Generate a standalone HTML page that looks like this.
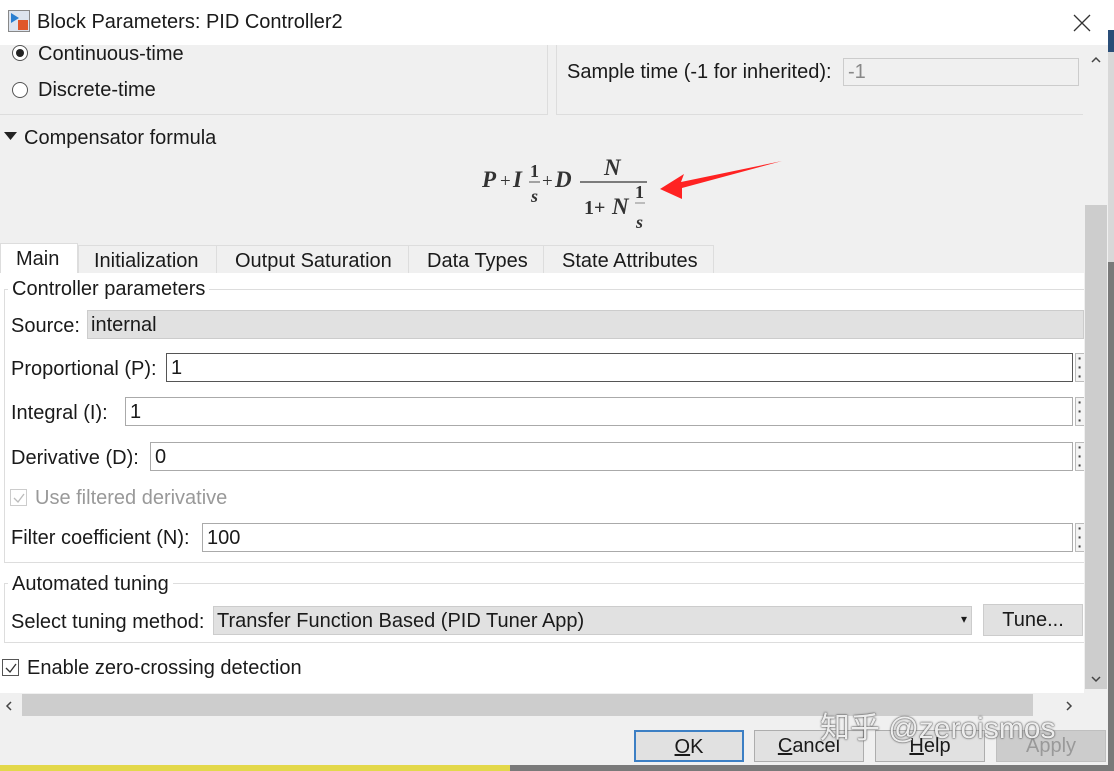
<!DOCTYPE html>
<html><head><meta charset="utf-8"><style>
*{margin:0;padding:0;box-sizing:border-box}
body{width:1114px;height:771px;overflow:hidden;background:#7a7a7a;font-family:"Liberation Sans",sans-serif;font-size:20px;color:#1a1a1a;position:relative}
.a{position:absolute;white-space:nowrap}
.inp{position:absolute;background:#fff;border:1px solid #aaa;height:29px;padding-left:4px;line-height:28px}
.dots{position:absolute;width:10px;height:29px;border:1px solid #bbb;background:#f4f4f4;font-size:14px;line-height:9px;text-align:center;color:#444;font-weight:bold}
.btn{position:absolute;top:730px;height:32px;background:#e1e1e1;border:1px solid #adadad;text-align:center;line-height:31px}
</style></head><body>
<div class="a" style="left:1108px;top:0;width:6px;height:30px;background:#fff"></div>
<div class="a" style="left:1108px;top:30px;width:6px;height:22px;background:#2a4e78"></div>
<div class="a" style="left:1108px;top:52px;width:6px;height:210px;background:#d8d8d8"></div>
<div class="a" style="left:0;top:0;width:1108px;height:765px;background:#f0f0f0"></div>
<div class="a" style="left:0;top:765px;width:510px;height:6px;background:#e3d84a"></div>
<div class="a" style="left:0;top:0;width:1108px;height:45px;background:#fff"></div>
<div class="a" style="left:8px;top:10px;width:22px;height:22px;border:1px solid #888;background:#dde4ee"><div class="a" style="left:2px;top:2px;width:0;height:0;border-left:8px solid #2a7fd0;border-top:5px solid transparent;border-bottom:5px solid transparent"></div><div class="a" style="left:9px;top:9px;width:10px;height:10px;background:#e0572a"></div></div>
<div class="a" style="left:37px;top:11px;font-size:20px">Block Parameters: PID Controller2</div>
<svg class="a" style="left:1072px;top:13px" width="20" height="20"><path d="M2 2L18 18M18 2L2 18" stroke="#333" stroke-width="1.3"/></svg>
<div class="a" style="left:0;top:45px;width:548px;height:70px;border-right:1px solid #ddd;border-bottom:1px solid #ddd"></div>
<div class="a" style="left:556px;top:45px;width:527px;height:70px;border-left:1px solid #ddd;border-bottom:1px solid #ddd"></div>
<div class="a" style="left:12px;top:45px;width:16px;height:16px;border:1px solid #555;border-radius:50%;background:#fff"><div class="a" style="left:3px;top:3px;width:8px;height:8px;border-radius:50%;background:#222"></div></div>
<div class="a" style="left:38px;top:43px">Continuous-time</div>
<div class="a" style="left:12px;top:82px;width:16px;height:16px;border:1px solid #555;border-radius:50%;background:#fff"></div>
<div class="a" style="left:38px;top:79px">Discrete-time</div>
<div class="a" style="left:567px;top:61px">Sample time (-1 for inherited):</div>
<div class="a" style="left:843px;top:58px;width:236px;height:28px;border:1px solid #ccc;background:#f0f0f0;color:#888;padding-left:4px;line-height:27px">-1</div>
<svg class="a" style="left:4px;top:132px" width="14" height="10"><path d="M0 0H13L6.5 8Z" fill="#222"/></svg>
<div class="a" style="left:24px;top:127px">Compensator formula</div>
<svg class="a" style="left:470px;top:150px" width="320" height="85" font-family="Liberation Serif,serif" fill="#333">
<text x="12" y="37" font-size="23" font-style="italic" font-weight="bold">P</text>
<text x="30" y="37" font-size="19">+</text>
<text x="43" y="37" font-size="23" font-style="italic" font-weight="bold">I</text>
<text x="60" y="27" font-size="18" font-weight="bold">1</text>
<line x1="59" y1="32" x2="70" y2="32" stroke="#555"/>
<text x="61" y="52" font-size="18" font-style="italic" font-weight="bold">s</text>
<text x="72" y="37" font-size="19">+</text>
<text x="85" y="37" font-size="23" font-style="italic" font-weight="bold">D</text>
<line x1="110" y1="32" x2="177" y2="32" stroke="#555" stroke-width="1.5"/>
<text x="134" y="25" font-size="23" font-style="italic" font-weight="bold">N</text>
<text x="114" y="64" font-size="20" font-weight="bold">1+</text>
<text x="142" y="64" font-size="23" font-style="italic" font-weight="bold">N</text>
<text x="165" y="48" font-size="18" font-weight="bold">1</text>
<line x1="165" y1="53" x2="175" y2="53" stroke="#888"/>
<text x="166" y="78" font-size="18" font-style="italic" font-weight="bold">s</text>
<polygon points="190,39 214,24 211,32 312,11 212,38 212,49" fill="#f22"/>
</svg>
<div class="a" style="left:0;top:243px;width:78px;height:32px;background:#fff;border:1px solid #ddd;border-bottom:none"></div>
<div class="a" style="left:16px;top:248px">Main</div>
<div class="a" style="left:78px;top:245px;width:636px;height:28px;border:1px solid #ddd;border-bottom:none"></div>
<div class="a" style="left:216px;top:245px;width:1px;height:28px;background:#ddd"></div>
<div class="a" style="left:408px;top:245px;width:1px;height:28px;background:#ddd"></div>
<div class="a" style="left:543px;top:245px;width:1px;height:28px;background:#ddd"></div>
<div class="a" style="left:94px;top:250px">Initialization</div>
<div class="a" style="left:235px;top:250px">Output Saturation</div>
<div class="a" style="left:427px;top:250px">Data Types</div>
<div class="a" style="left:562px;top:250px">State Attributes</div>
<div class="a" style="left:0;top:273px;width:1084px;height:420px;background:#fff"></div>
<div class="a" style="left:4px;top:289px;width:1080px;height:274px;border:1px solid #ddd;border-right:none"></div>
<div class="a" style="left:8px;top:278px;background:#fff;padding:0 4px">Controller parameters</div>
<div class="a" style="left:11px;top:315px">Source:</div>
<div class="a" style="left:87px;top:310px;width:997px;height:29px;background:#e1e1e1;border:1px solid #ccc;padding-left:3px;line-height:28px">internal</div>
<div class="a" style="left:11px;top:358px">Proportional (P):</div>
<div class="inp" style="left:166px;top:353px;width:907px;border-color:#555">1</div>
<div class="dots" style="left:1075px;top:353px">·<br>·<br>·</div>
<div class="a" style="left:11px;top:402px">Integral (I):</div>
<div class="inp" style="left:125px;top:397px;width:948px">1</div>
<div class="dots" style="left:1075px;top:397px">·<br>·<br>·</div>
<div class="a" style="left:11px;top:447px">Derivative (D):</div>
<div class="inp" style="left:150px;top:442px;width:923px">0</div>
<div class="dots" style="left:1075px;top:442px">·<br>·<br>·</div>
<div class="a" style="left:10px;top:489px;width:17px;height:17px;border:1px solid #ccc"></div>
<svg class="a" style="left:11px;top:490px" width="16" height="16"><path d="M3 8L7 12L13 4" stroke="#bbb" fill="none" stroke-width="1.3"/></svg>
<div class="a" style="left:35px;top:487px;color:#999">Use filtered derivative</div>
<div class="a" style="left:11px;top:527px">Filter coefficient (N):</div>
<div class="inp" style="left:202px;top:523px;width:871px">100</div>
<div class="dots" style="left:1075px;top:523px">·<br>·<br>·</div>
<div class="a" style="left:4px;top:583px;width:1080px;height:60px;border:1px solid #ddd;border-right:none"></div>
<div class="a" style="left:8px;top:573px;background:#fff;padding:0 4px">Automated tuning</div>
<div class="a" style="left:11px;top:611px">Select tuning method:</div>
<div class="a" style="left:213px;top:606px;width:759px;height:29px;background:#e1e1e1;border:1px solid #ccc;padding-left:3px;line-height:28px">Transfer Function Based (PID Tuner App)</div>
<div class="a" style="left:961px;top:612px;font-size:12px">▾</div>
<div class="a" style="left:983px;top:604px;width:100px;height:32px;background:#e1e1e1;border:1px solid #ccc;text-align:center;line-height:31px">Tune...</div>
<div class="a" style="left:2px;top:659px;width:17px;height:17px;border:1px solid #555"></div>
<svg class="a" style="left:3px;top:660px" width="16" height="16"><path d="M3 8L7 12L13 4" stroke="#333" fill="none" stroke-width="1.3"/></svg>
<div class="a" style="left:27px;top:657px">Enable zero-crossing detection</div>
<div class="a" style="left:1084px;top:45px;width:24px;height:648px;background:#f0f0f0"></div>
<div class="a" style="left:1085px;top:205px;width:22px;height:484px;background:#cdcdcd"></div>
<svg class="a" style="left:1090px;top:55px" width="12" height="10"><path d="M2 7L6 3L10 7" stroke="#444" stroke-width="1.5" fill="none"/></svg>
<svg class="a" style="left:1090px;top:674px" width="12" height="10"><path d="M2 3L6 7L10 3" stroke="#444" stroke-width="1.5" fill="none"/></svg>
<div class="a" style="left:0;top:693px;width:1084px;height:24px;background:#f0f0f0"></div>
<div class="a" style="left:22px;top:694px;width:1011px;height:22px;background:#cdcdcd"></div>
<svg class="a" style="left:4px;top:700px" width="10" height="12"><path d="M7 2L3 6L7 10" stroke="#444" stroke-width="1.5" fill="none"/></svg>
<svg class="a" style="left:1064px;top:700px" width="10" height="12"><path d="M3 2L7 6L3 10" stroke="#444" stroke-width="1.5" fill="none"/></svg>
<div class="btn" style="left:634px;width:110px;border:2px solid #3c7fc4"><u>O</u>K</div>
<div class="btn" style="left:754px;width:110px"><u>C</u>ancel</div>
<div class="btn" style="left:875px;width:110px"><u>H</u>elp</div>
<div class="btn" style="left:996px;width:110px;background:#ccc;border-color:#bfbfbf;color:#999">Apply</div>
<div class="a" style="left:820px;top:703px;font-size:30px;color:rgba(255,255,255,0.9);text-shadow:0 0 2px #444,0 0 1px #444;font-family:'Liberation Sans','Noto Sans CJK SC',sans-serif">知乎 @zeroismos</div>
</body></html>
